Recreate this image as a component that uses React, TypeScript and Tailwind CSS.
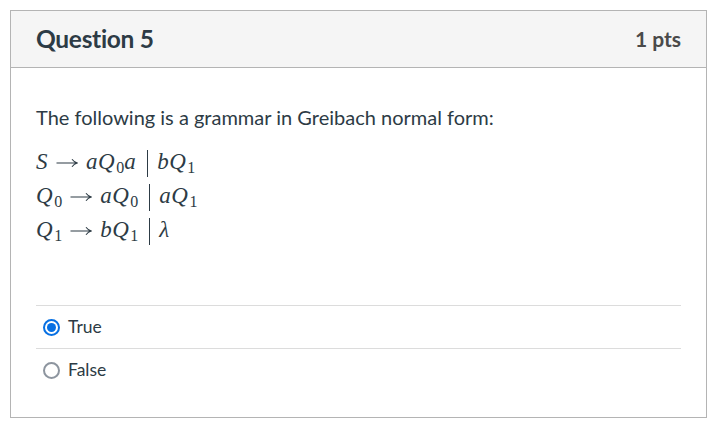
import React from "react";

const serif = { fontFamily: '"Liberation Serif", "DejaVu Serif", serif' };

function Sub({ n }: { n: string }) {
  return <span className="text-[16px] not-italic relative top-[4px] ml-[1px]">{n}</span>;
}

function Arrow() {
  return (
    <svg className="mx-[8px] self-center relative top-[1px]" width="22" height="10" viewBox="0 0 22 10">
      <path d="M0.5 5 H20.5 M16 1.2 Q18 4 21.3 5 Q18 6 16 8.8" fill="none" stroke="#2d3b45" strokeWidth="1.1" />
    </svg>
  );
}

function Bar() {
  return <span className="ml-[11px] mr-[9px] self-center w-[1px] h-[27px] bg-[#2d3b45] relative top-[1px]" />;
}

function It({ t }: { t: string }) {
  return <span className="italic tracking-[0.5px]">{t}</span>;
}

function Rule({ lhs, sub, rhs }: { lhs: string; sub?: string; rhs: React.ReactNode }) {
  return (
    <div className="flex items-baseline h-[34px] leading-[34px]">
      <It t={lhs} />
      {sub && <Sub n={sub} />}
      <Arrow />
      {rhs}
    </div>
  );
}

export default function App() {
  return (
    <div className="w-[717px] h-[428px] bg-white p-[10px] font-['Lato','Noto_Sans',sans-serif] text-[#2d3b45]">
      <div className="border border-[#b4b4b4] h-[408px] flex flex-col">
        {/* header */}
        <div className="h-[57px] bg-[#f5f5f5] border-b border-[#b4b4b4] flex items-center justify-between px-[25px]">
          <span className="text-[24.5px] font-bold tracking-[-0.3px]">Question 5</span>
          <span className="text-[21px] font-bold text-[#4a4a4a]">1 pts</span>
        </div>
        {/* body */}
        <div className="px-[25px] pt-[37px]">
          <p className="text-[20px] leading-[24px]">The following is a grammar in Greibach normal form:</p>
          <div className="mt-[16px] text-[23px]" style={serif}>
            <Rule
              lhs="S"
              rhs={
                <>
                  <It t="aQ" />
                  <Sub n="0" />
                  <It t="a" />
                  <Bar />
                  <It t="bQ" />
                  <Sub n="1" />
                </>
              }
            />
            <Rule
              lhs="Q"
              sub="0"
              rhs={
                <>
                  <It t="aQ" />
                  <Sub n="0" />
                  <Bar />
                  <It t="aQ" />
                  <Sub n="1" />
                </>
              }
            />
            <Rule
              lhs="Q"
              sub="1"
              rhs={
                <>
                  <It t="bQ" />
                  <Sub n="1" />
                  <Bar />
                  <It t="λ" />
                </>
              }
            />
          </div>
          {/* answers */}
          <div className="mt-[58px] border-t border-[#dcdcdc]">
            <div className="h-[43px] flex items-center gap-[8px] border-b border-[#dcdcdc] pl-[7px]">
              <span className="w-[17px] h-[17px] rounded-full border-2 border-[#0770e3] flex items-center justify-center">
                <span className="w-[9px] h-[9px] rounded-full bg-[#0770e3]" />
              </span>
              <span className="text-[17.5px]">True</span>
            </div>
            <div className="h-[43px] flex items-center gap-[8px] pl-[7px]">
              <span className="w-[17px] h-[17px] rounded-full border-2 border-[#8d959f] bg-white" />
              <span className="text-[17.5px]">False</span>
            </div>
          </div>
        </div>
      </div>
    </div>
  );
}
